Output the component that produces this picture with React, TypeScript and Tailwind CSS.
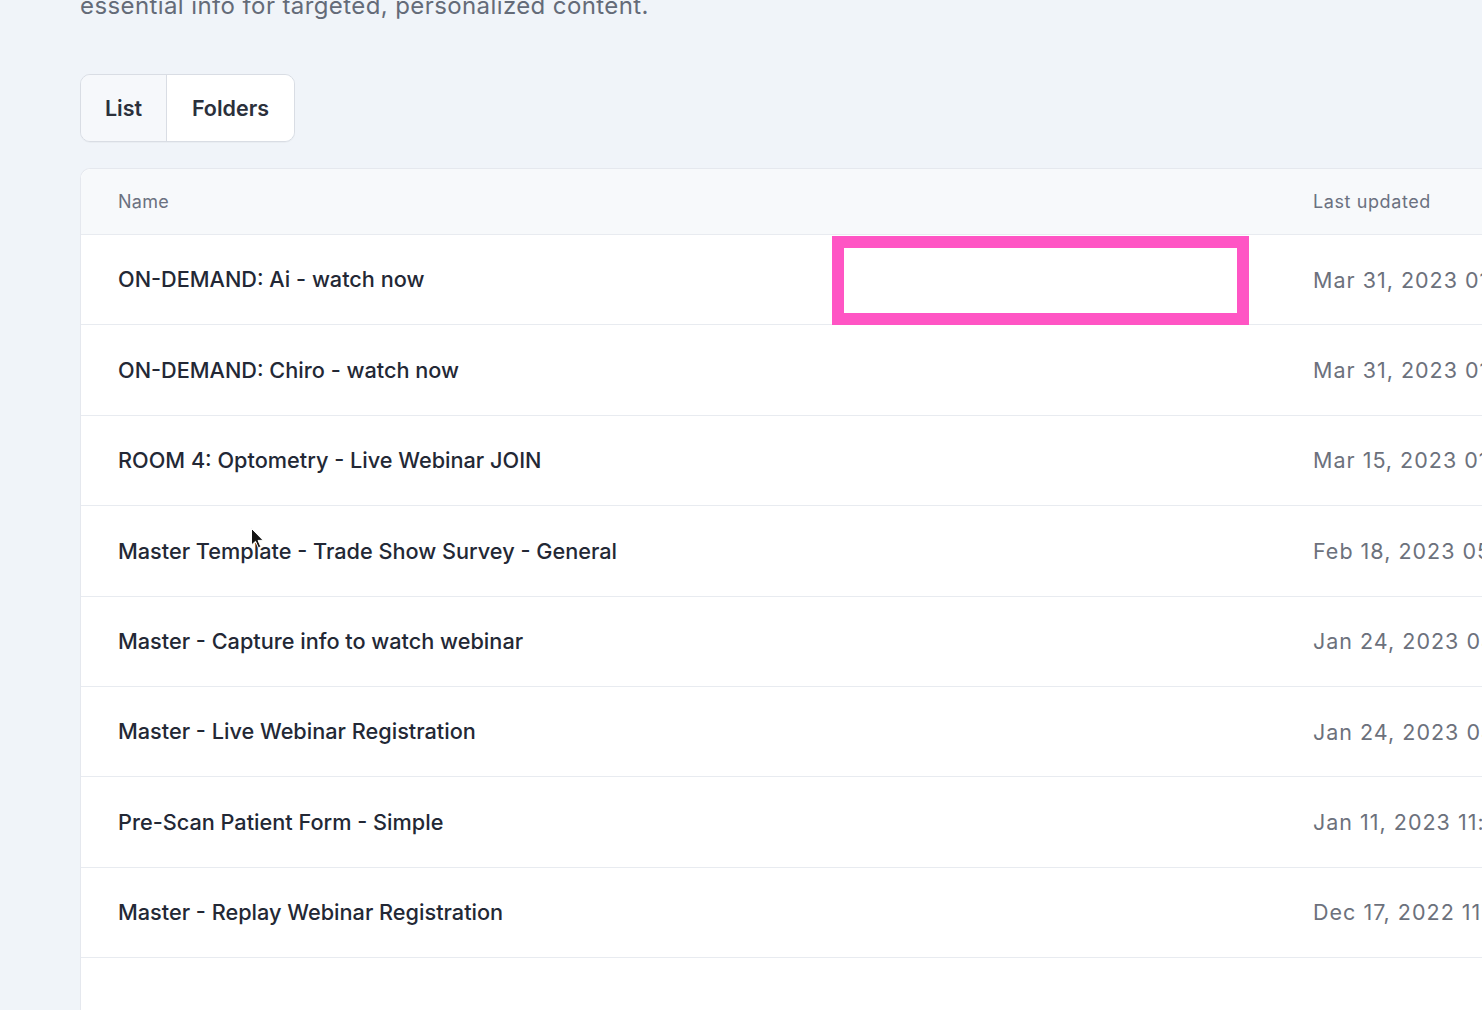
import React from 'react';

const rows = [
  { name: 'ON-DEMAND: Ai - watch now', updated: 'Mar 31, 2023 01:42 PM' },
  { name: 'ON-DEMAND: Chiro - watch now', updated: 'Mar 31, 2023 01:38 PM' },
  { name: 'ROOM 4: Optometry - Live Webinar JOIN', updated: 'Mar 15, 2023 01:10 PM' },
  { name: 'Master Template - Trade Show Survey - General', updated: 'Feb 18, 2023 05:21 PM' },
  { name: 'Master - Capture info to watch webinar', updated: 'Jan 24, 2023 04:55 PM' },
  { name: 'Master - Live Webinar Registration', updated: 'Jan 24, 2023 04:12 PM' },
  { name: 'Pre-Scan Patient Form - Simple', updated: 'Jan 11, 2023 11:03 AM' },
  { name: 'Master - Replay Webinar Registration', updated: 'Dec 17, 2022 11:47 AM' },
];

function Cursor() {
  return (
    <svg width="16" height="24" viewBox="0 0 16 24" className="absolute left-[250px] top-[527px] pointer-events-none">
      <path d="M1.5 1.5 L1.5 18 L5.5 14.3 L8.4 20.8 L10.8 19.7 L8 13.4 L13.2 13.4 Z" fill="#151515" stroke="#fff" strokeWidth="1" strokeLinejoin="round" />
    </svg>
  );
}

export default function App() {
  return (
    <div className="relative w-[1482px] h-[1010px] overflow-hidden bg-[#f0f4f9] font-['Inter',sans-serif]">
      <div className="pl-[80px]">
        <p className="mt-[-45px] text-[24px] leading-[34px] text-[#646b78] whitespace-nowrap tracking-[0.4px]">
          Create forms that help you capture your audience's
          <br />
          essential info for targeted, personalized content.
        </p>

        <div className="mt-[51px] inline-flex rounded-[10px] border border-[#d9dde4] overflow-hidden shadow-[0_1px_1px_rgba(0,0,0,0.03)]">
          <button className="h-[66px] w-[86px] bg-[#f6f8fb] text-[21.5px] font-semibold text-[#2b303b] border-r border-[#d9dde4]">
            List
          </button>
          <button className="h-[66px] w-[127px] bg-white text-[21.5px] font-semibold text-[#2b303b]">
            Folders
          </button>
        </div>

        <div className="mt-[26px] w-[1500px] rounded-tl-[10px] border-l border-t border-[#e5e8ee] bg-white">
          <div className="grid grid-cols-[1195px_1fr] h-[66px] items-center bg-[#f7f9fb] border-b border-[#e8ebf0] rounded-tl-[10px]">
            <div className="pl-[37px] text-[18px] tracking-[0.3px] text-[#6b7180]">Name</div>
            <div className="pl-[37px] text-[18px] tracking-[0.6px] text-[#6b7180]">Last updated</div>
          </div>
          {rows.map((row, i) => (
            <div key={i} className="relative grid grid-cols-[1195px_1fr] h-[90.4px] items-center border-b border-[#e8ebf0]">
              <div className="pl-[37px] text-[21.7px] font-medium text-[#232835] whitespace-nowrap">{row.name}</div>
              <div className="pl-[37px] text-[21.5px] text-[#6c717c] whitespace-nowrap tracking-[1px]">{row.updated}</div>
              {i === 0 && (
                <div className="absolute left-[751px] top-[1px] w-[417px] h-[89px] border-[12px] border-[#ff55c4] bg-white" />
              )}
            </div>
          ))}
          <div className="h-[200px]" />
        </div>
      </div>
      <Cursor />
    </div>
  );
}
